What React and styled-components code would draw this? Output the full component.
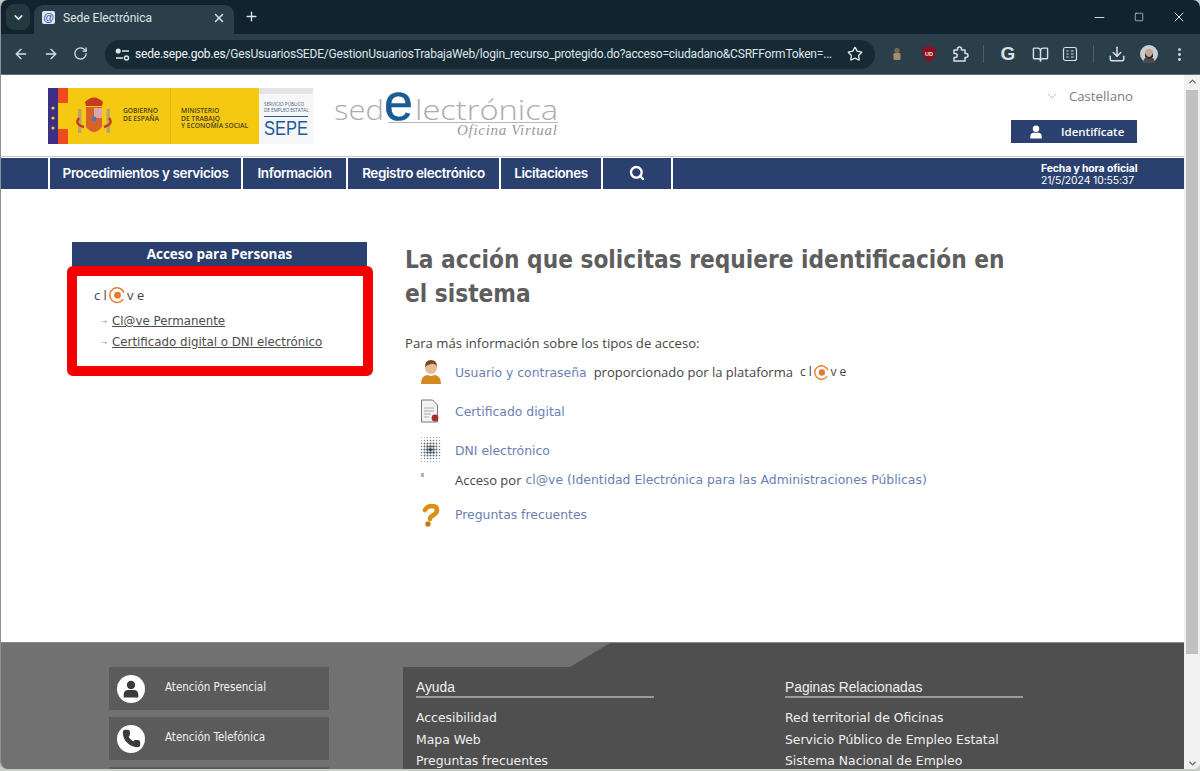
import React from 'react';
import styled, { createGlobalStyle } from 'styled-components';
import {
  ArrowLeft, ArrowRight, BookOpen, ChevronDown, ChevronUp, Download, Minus, MoreVertical,
  Plus, RotateCw, Search, Square, Star, X, Phone,
} from 'lucide-react';

const GlobalStyle = createGlobalStyle`
  html, body {
    margin: 0;
    height: 771px;
    overflow: hidden;
    background: #c7cdc6;
  }
  * { box-sizing: border-box; }
`;

const Win = styled.div`
  width: 1200px;
  height: 769px;
  border-radius: 7px;
  overflow: hidden;
  display: flex;
  flex-direction: column;
  background: #fff;
  border-left: 1px solid #8b9396;
`;

const TabStrip = styled.div`
  height: 34px;
  flex: none;
  background: #10232e;
  display: flex;
  align-items: flex-end;
  padding-left: 5px;
  color: #dfe5e8;
  font-family: Roboto, sans-serif;
`;

const TabMenu = styled.div`
  width: 24px;
  height: 26px;
  margin-bottom: 4px;
  border-radius: 8px;
  background: #24383f;
  display: flex;
  align-items: center;
  justify-content: center;
`;

const Tab = styled.div`
  width: 200px;
  height: 29px;
  margin-left: 4px;
  padding: 0 8px 4px 8px;
  border-radius: 9px 9px 0 0;
  background: #2a3f49;
  display: flex;
  align-items: center;
  font-size: 12px;
`;

const Favicon = styled.div`
  width: 13px;
  height: 13px;
  margin-right: 8px;
  border-radius: 2px;
  background: #dfe7f5;
  color: #3c5fa8;
  font: 700 11px/13px "Liberation Sans", sans-serif;
  text-align: center;
`;

const TabTitle = styled.span`
  flex: 1;
`;

const NewTab = styled.div`
  margin: 0 0 10px 10px;
  display: flex;
`;

const WinControls = styled.div`
  margin-left: auto;
  height: 34px;
  display: flex;
  align-items: center;
  gap: 24px;
  padding-right: 13px;
`;

const Toolbar = styled.div`
  height: 41px;
  flex: none;
  background: #2a3f49;
  border-bottom: 1px solid #5f6e74;
  display: flex;
  align-items: center;
  padding-left: 12px;
  color: #d9e0e3;
`;

const NavIcons = styled.div`
  width: 92px;
  flex: none;
  display: flex;
  gap: 14px;
`;

const Omnibox = styled.div`
  width: 770px;
  flex: none;
  height: 29px;
  border-radius: 15px;
  background: #162a35;
  display: flex;
  align-items: center;
  padding: 0 12px 0 10px;
  font: 12px Roboto, sans-serif;
  letter-spacing: -0.2px;
  white-space: nowrap;
  color: #dfe5e8;
`;

const SiteInfo = styled.div`
  width: 20px;
  flex: none;
  display: flex;
`;

const Url = styled.span`
  flex: 1;
  min-width: 0;
  span { color: #f4f6f7; }
`;

const ExtIcons = styled.div`
  flex: 1;
  display: flex;
  align-items: center;
  padding-left: 6px;
`;

const ToolSlot = styled.div`
  width: ${(p) => p.$w}px;
  flex: none;
  display: flex;
  justify-content: center;
`;

const Divider = styled.div`
  width: 1px;
  height: 18px;
  background: #4c5f68;
`;

const GoogleG = styled.span`
  font: 700 19px/20px "Liberation Sans", sans-serif;
  color: #d9e0e3;
`;

const Viewport = styled.div`
  flex: 1;
  min-height: 0;
  display: flex;
`;

const Page = styled.div`
  flex: 1;
  min-width: 0;
  display: flex;
  flex-direction: column;
`;

const Scrollbar = styled.div`
  width: 16px;
  flex: none;
  background: #f1f1f1;
  display: flex;
  flex-direction: column;
  align-items: center;
  color: #666;
  padding: 1px 0 0;
`;

const ScrollThumb = styled.div`
  width: 12px;
  height: 564px;
  margin-top: 3px;
  background: #c1c1c1;
`;

const ScrollEnd = styled.div`
  margin-top: auto;
  display: flex;
`;

const Header = styled.header`
  height: 81px;
  flex: none;
  display: flex;
  padding: 13px 47px 0 47px;
`;

const HeaderRight = styled.div`
  margin-left: auto;
  display: flex;
  flex-direction: column;
  align-items: flex-end;
`;

const Language = styled.div`
  display: flex;
  align-items: center;
  gap: 9px;
  height: 18px;
  margin: -1px 4px 0 0;
  font: 13.2px "Open Sans", sans-serif;
  color: #7c7c7c;
`;

const LoginButton = styled.div`
  width: 126px;
  height: 23px;
  margin-top: 15px;
  background: #2a4170;
  color: #fff;
  display: flex;
  align-items: center;
  padding-left: 18px;
  gap: 18px;
  font: 600 11.5px "Open Sans", sans-serif;
`;

const NavBar = styled.nav`
  height: 33px;
  flex: none;
  display: flex;
  gap: 2px;
  padding-top: 1px;
  border-top: 1px solid #c4c9d0;
  background: #fff;
`;

const NavItem = styled.div`
  width: ${(p) => p.$w}px;
  padding-bottom: 1px;
  background: #2a4170;
  color: #fff;
  font: 600 13.5px Inter, sans-serif;
  letter-spacing: -0.4px;
  display: flex;
  align-items: center;
  justify-content: center;
`;

const Clock = styled.div`
  flex: 1;
  background: #2a4170;
  color: #fff;
  padding: 5px 0 0 368px;
  font: 10.4px/12px Inter, sans-serif;
  letter-spacing: -0.1px;
  white-space: nowrap;
  b { display: block; font-weight: 700; }
`;

const Main = styled.main`
  flex: 1;
  min-height: 0;
  display: flex;
  padding: 53px 0 0 66px;
`;

const Sidebar = styled.aside`
  width: 306px;
  flex: none;
`;

const SideTitle = styled.div`
  margin: 0 6px 0 5px;
  height: 24px;
  background: #2a4170;
  color: #fff;
  text-align: center;
  font: 700 13.5px/24px "Open Sans", sans-serif;
`;

const SideBox = styled.div`
  height: 110px;
  border: 10px solid #f40000;
  border-radius: 6px;
  padding: 10px 17px 0;
  background: #fff;
`;

const SideLinks = styled.div`
  margin-top: 7px;
`;

const SideLink = styled.a`
  display: block;
  margin-left: 7px;
  height: 21px;
  font: 11.85px/21px "DejaVu Sans", sans-serif;
  color: #4c4c4c;
  text-decoration: underline;
  &::before {
    content: '→';
    display: inline-block;
    width: 11px;
    font-size: 7px;
    vertical-align: 1px;
    color: #999;
  }
`;

const Content = styled.section`
  margin-left: 32px;
  width: 640px;
`;

const Title = styled.h1`
  margin: 0;
  padding-top: 1px;
  font: 700 24.2px/34px "DejaVu Sans Condensed", "DejaVu Sans", sans-serif;
  color: #5e5e5e;
  width: 610px;
`;

const Lead = styled.p`
  margin: 23px 0 0;
  font: 13.15px/18px "Open Sans", sans-serif;
  color: #444;
`;

const AccessList = styled.ul`
  list-style: none;
  margin: 0;
  padding: 0 0 0 15px;
`;

const AccessRow = styled.li`
  height: ${(p) => p.$h}px;
  display: flex;
  align-items: center;
  font: 13px "Open Sans", sans-serif;
  color: #444;
  white-space: nowrap;
`;

const RowIcon = styled.div`
  width: 35px;
  flex: none;
  display: flex;
`;

const InfoLink = styled.a`
  font: 12.4px "DejaVu Sans", sans-serif;
  color: #6b80b4;
  margin-left: ${(p) => p.$ml || 0}px;
`;

const PlainText = styled.span`
  margin: 0 ${(p) => p.$mr || 0}px 0 ${(p) => p.$ml || 0}px;
`;

const ClaveMark = styled.span`
  display: inline-flex;
  align-items: center;
  font: ${(p) => p.$size}px "Open Sans", sans-serif;
  letter-spacing: ${(p) => p.$size * 0.26}px;
  color: #444;
  line-height: 1;
  svg { margin: 0 ${(p) => p.$size * 0.14}px 0 -${(p) => p.$size * 0.1}px; }
`;

const Footer = styled.footer`
  height: 127px;
  flex: none;
  display: flex;
  overflow: hidden;
  background: #717171;
  border-top: 1px solid #8a8a8a;
  padding-left: 108px;
`;

const ContactCol = styled.div`
  width: 220px;
  flex: none;
  padding-top: 24px;
`;

const ContactButton = styled.div`
  height: 43px;
  margin-bottom: 7px;
  background: #5b5b5b;
  display: flex;
  align-items: center;
  padding-left: 8px;
  color: #f2f2f2;
  font: 11.5px "DejaVu Sans Condensed", "DejaVu Sans", sans-serif;
`;

const ContactLabel = styled.span`
  padding-bottom: 3px;
`;

const CircleIcon = styled.div`
  width: 28px;
  height: 28px;
  margin-right: 20px;
  border-radius: 50%;
  background: #fff;
  color: #3b3b3b;
  display: flex;
  align-items: center;
  justify-content: center;
`;

const LinksPanel = styled.div`
  flex: 1;
  margin-left: 74px;
  padding: 36px 0 0 13px;
  background: #4f4f4f;
  clip-path: polygon(0 24px, 167px 24px, 207px 0, 100% 0, 100% 100%, 0 100%);
  display: flex;
  gap: 131px;
`;

const LinkCol = styled.div`
  width: 238px;
  flex: none;
`;

const LinkHead = styled.div`
  height: 19px;
  border-bottom: 2px solid #9a9a9a;
  font: 13.8px/17px "Liberation Sans", sans-serif;
  color: #f0f0f0;
  margin-bottom: 9px;
`;

const FooterLink = styled.div`
  height: 21.5px;
  font: 12.4px/21.5px "DejaVu Sans", sans-serif;
  color: #f0f0f0;
  white-space: nowrap;
`;

const navItems = [
  ['Procedimientos y servicios', 191],
  ['Información', 103],
  ['Registro electrónico', 151],
  ['Licitaciones', 100],
];

const ClaveLogo = ({ size }) => (
  <ClaveMark $size={size}>
    cl
    <svg width={size * 1.25} height={size * 1.25} viewBox="0 0 20 20">
      <path d="M17.5 15A9 9 0 1 1 18.5 7" fill="none" stroke="#e8792b" strokeWidth="1.8" />
      <circle cx="10.5" cy="10" r="4.2" fill="#e8792b" />
    </svg>
    ve
  </ClaveMark>
);

const GovLogo = () => (
  <svg width="266" height="56" viewBox="0 0 266 56">
    <rect width="265" height="56" fill="#f6f6f6" />
    <rect width="211" height="56" fill="#f5c912" />
    <rect width="10" height="56" fill="#3d2f87" />
    <rect x="10" y="0" width="10" height="15" fill="#ee4b1f" />
    <rect x="10" y="41" width="10" height="15" fill="#ee4b1f" />
    <g fill="#f5c912">
      <circle cx="5" cy="20" r="1.6" />
      <circle cx="5" cy="30" r="1.6" />
      <circle cx="5" cy="40" r="1.6" />
    </g>
    {/* escudo */}
    <path d="M37 14q9-9 18 0l-1 4H38z" fill="#c73a1c" />
    <rect x="30" y="21" width="3.5" height="24" fill="#b8a36a" />
    <rect x="58.5" y="21" width="3.5" height="24" fill="#b8a36a" />
    <path d="M38 19h16v20q-8 10-16 0z" fill="#d8622a" />
    <rect x="46" y="20" width="8" height="10" fill="#d9a5b0" />
    <path d="M31 30q-5 6 5 9M61 30q5 6-5 9" stroke="#c73a1c" strokeWidth="2.4" fill="none" />
    <circle cx="46" cy="31" r="2.5" fill="#5b6fa8" />
    <rect x="122" width="1" height="56" fill="#e2b80e" />
    <g fontFamily="'Open Sans', sans-serif" fontSize="6.7" fontWeight="600" fill="#4a4020">
      <text x="75" y="25">GOBIERNO</text>
      <text x="75" y="33">DE ESPAÑA</text>
      <text x="133" y="25">MINISTERIO</text>
      <text x="133" y="33">DE TRABAJO</text>
      <text x="133" y="40">Y ECONOMÍA SOCIAL</text>
    </g>
    <rect x="211" width="54" height="6" fill="#e4e4e4" />
    <g fontFamily="'Open Sans', sans-serif" fontSize="4.6" fill="#3d5a8a">
      <text x="216" y="18">SERVICIO PÚBLICO</text>
      <text x="216" y="24">DE EMPLEO ESTATAL</text>
    </g>
    <rect x="216" y="28" width="44" height="1" fill="#2a5a93" />
    <text x="216" y="47" fontFamily="'Liberation Sans', sans-serif" fontSize="19.5" fill="#1d5a9a" textLength="44" lengthAdjust="spacingAndGlyphs">SEPE</text>
  </svg>
);

const SedeLogo = () => (
  <svg width="228" height="70" viewBox="0 0 228 70" style={{ marginLeft: 20, marginTop: -13 }}>
    <g fontFamily="'Open Sans', sans-serif" fill="#a9adaf" fontWeight="300" fontSize="28">
      <text x="0" y="45" textLength="50" lengthAdjust="spacingAndGlyphs">sed</text>
      <text x="81" y="45" textLength="143" lengthAdjust="spacingAndGlyphs">lectrónica</text>
    </g>
    <text x="50" y="45" fontFamily="'Liberation Sans', sans-serif" fontSize="52" fill="#1b5b94" stroke="#1b5b94" strokeWidth="0.6">e</text>
    <rect x="54" y="47" width="170" height="1" fill="#b4b8ba" />
    <text x="123" y="60" fontFamily="'Liberation Serif', serif" fontStyle="italic" fontSize="15" fill="#9a9a9a" letterSpacing="0.7">Oficina Virtual</text>
  </svg>
);

const PersonSolid = ({ size, color }) => (
  <svg width={size} height={size} viewBox="0 0 16 16">
    <circle cx="8" cy="4.4" r="3.7" fill={color} />
    <path d="M1.5 15.5v-2.4q0-4.3 4-4.3h5q4 0 4 4.3v2.4z" fill={color} />
  </svg>
);

const UserBadge = () => (
  <svg width="22" height="26" viewBox="0 0 22 26">
    <path d="M1 25q0-8 6-9l4 1 4-1q6 1 6 9z" fill="#d08a1e" />
    <circle cx="11" cy="9" r="6" fill="#e7bd97" />
    <path d="M5 8q0-7 6-7t6 7q-2-4-6-3t-6 3z" fill="#7a4a23" />
  </svg>
);

const CertBadge = () => (
  <svg width="20" height="25" viewBox="0 0 20 25">
    <path d="M1.5 1h11l5 5v17h-16z" fill="#f3f3f3" stroke="#777" />
    <path d="M4 9h10M4 12h10M4 15h7M4 18h5" stroke="#aaa" />
    <circle cx="15" cy="19" r="3.4" fill="#a92c2c" />
  </svg>
);

const dniDots = [];
for (let y = 0; y < 9; y++) {
  for (let x = 0; x < 7; x++) {
    const d = Math.hypot(x - 3, y - 4);
    dniDots.push({ x: x * 3 + 1.5, y: y * 3 + 1.5, r: Math.max(0.5, 1.6 - d * 0.25), o: Math.max(0.45, 1 - d * 0.1) });
  }
}

const DniBadge = () => (
  <svg width="21" height="28" viewBox="0 0 21 28">
    {dniDots.map((d) => (
      <circle key={`${d.x}-${d.y}`} cx={d.x} cy={d.y} r={d.r} fill="#2c3a46" opacity={d.o} />
    ))}
  </svg>
);

const SmallDot = () => (
  <svg width="6" height="6" viewBox="0 0 6 6" style={{ margin: '-8px 0 0 0' }}>
    <rect x="1" y="1" width="3" height="4" fill="#b5b5b5" />
  </svg>
);

const QuestionBadge = () => (
  <svg width="20" height="24" viewBox="0 0 20 24">
    <path d="M5 7q2-4 7-4t5 4q0 3-3.5 5T10 16" fill="none" stroke="#dd8f12" strokeWidth="4.6" strokeLinecap="round" />
    <circle cx="8" cy="21" r="2.7" fill="#c87a0e" />
  </svg>
);

const UBlock = () => (
  <svg width="16" height="18" viewBox="0 0 16 18">
    <path d="M8 1l7 2q0 10-7 14Q1 13 1 3z" fill="#8a1220" />
    <text x="8" y="10.5" fontSize="5.5" fontWeight="700" fill="#eee" textAnchor="middle" fontFamily="'Liberation Sans', sans-serif">UD</text>
  </svg>
);

const Thumb = () => (
  <svg width="10" height="14" viewBox="0 0 10 14">
    <rect x="2.5" y="1" width="5" height="5" rx="2" fill="#7a6a55" />
    <rect x="1.5" y="6" width="7" height="7" rx="1" fill="#a38e6d" />
  </svg>
);

const TuneIcon = () => (
  <svg width="15" height="13" viewBox="0 0 15 13" fill="none" stroke="currentColor" strokeWidth="1.5">
    <circle cx="3.2" cy="3" r="1.8" fill="currentColor" />
    <path d="M7 3h7M1 10h7" />
    <circle cx="11.5" cy="10" r="2" />
  </svg>
);

const ExtensionIcon = () => (
  <svg width="18" height="18" viewBox="0 0 18 18" fill="none" stroke="currentColor" strokeWidth="1.5" strokeLinejoin="round">
    <path d="M3 5h3.5V4a2 2 0 0 1 4 0v1H14v3.5h1a2 2 0 0 1 0 4h-1V16H3v-3.5h1.2a2 2 0 0 0 0-4H3z" />
  </svg>
);

const ReaderIcon = () => (
  <svg width="16" height="16" viewBox="0 0 16 16" fill="none" stroke="currentColor" strokeWidth="1.2">
    <rect x="1.5" y="1.5" width="13" height="13" rx="2" />
    <path d="M4.5 5h2M9 5h2.5M4.5 8h2M9 8h2.5M4.5 11h2M9 11h2.5" />
  </svg>
);

const AvatarIcon = () => (
  <svg width="18" height="18" viewBox="0 0 18 18">
    <circle cx="9" cy="9" r="9" fill="#c9ced1" />
    <path d="M3 18q0-6 6-6t6 6z" fill="#4a4a50" />
    <circle cx="9" cy="8" r="4.2" fill="#c9a591" />
    <path d="M5 8q4 8 8 0v4q-4 4-8 0z" fill="#2f2c30" />
  </svg>
);

const App = () => (
  <>
    <GlobalStyle />
    <Win>
      <TabStrip>
        <TabMenu><ChevronDown size={13} strokeWidth={3} /></TabMenu>
        <Tab>
          <Favicon>@</Favicon>
          <TabTitle>Sede Electrónica</TabTitle>
          <X size={14} strokeWidth={2.4} />
        </Tab>
        <NewTab><Plus size={15} strokeWidth={2.2} /></NewTab>
        <WinControls>
          <Minus size={15} strokeWidth={1.5} />
          <Square size={10} strokeWidth={1.6} style={{ margin: '0 3px' }} />
          <X size={16} strokeWidth={1.5} />
        </WinControls>
      </TabStrip>
      <Toolbar>
        <NavIcons>
          <ArrowLeft size={16} />
          <ArrowRight size={16} />
          <RotateCw size={15} />
        </NavIcons>
        <Omnibox>
          <SiteInfo><TuneIcon /></SiteInfo>
          <Url><span>sede.sepe.gob.es</span>/GesUsuariosSEDE/GestionUsuariosTrabajaWeb/login_recurso_protegido.do?acceso=ciudadano&amp;CSRFFormToken=...</Url>
          <Star size={16} />
        </Omnibox>
        <ExtIcons>
          <ToolSlot $w={32}><Thumb /></ToolSlot>
          <ToolSlot $w={32}><UBlock /></ToolSlot>
          <ToolSlot $w={30}><ExtensionIcon /></ToolSlot>
          <ToolSlot $w={16}><Divider /></ToolSlot>
          <ToolSlot $w={34}><GoogleG>G</GoogleG></ToolSlot>
          <ToolSlot $w={30}><BookOpen size={17} /></ToolSlot>
          <ToolSlot $w={30}><ReaderIcon /></ToolSlot>
          <ToolSlot $w={16}><Divider /></ToolSlot>
          <ToolSlot $w={32}><Download size={18} /></ToolSlot>
          <ToolSlot $w={32}><AvatarIcon /></ToolSlot>
          <ToolSlot $w={28}><MoreVertical size={17} /></ToolSlot>
        </ExtIcons>
      </Toolbar>
      <Viewport>
        <Page>
          <Header>
            <GovLogo />
            <SedeLogo />
            <HeaderRight>
              <Language><ChevronDown size={16} strokeWidth={1} color="#aaa" />Castellano</Language>
              <LoginButton>
                <PersonSolid size={14} color="#fff" />
                Identifícate
              </LoginButton>
            </HeaderRight>
          </Header>
          <NavBar>
            <NavItem $w={47} />
            {navItems.map(([label, w]) => (
              <NavItem key={label} $w={w}>{label}</NavItem>
            ))}
            <NavItem $w={68}><Search size={16} strokeWidth={3.5} /></NavItem>
            <Clock>
              <b>Fecha y hora oficial</b>
              21/5/2024 10:55:37
            </Clock>
          </NavBar>
          <Main>
            <Sidebar>
              <SideTitle>Acceso para Personas</SideTitle>
              <SideBox>
                <ClaveLogo size={13} />
                <SideLinks>
                  <SideLink>Cl@ve Permanente</SideLink>
                  <SideLink>Certificado digital o DNI electrónico</SideLink>
                </SideLinks>
              </SideBox>
            </Sidebar>
            <Content>
              <Title>La acción que solicitas requiere identificación en el sistema</Title>
              <Lead>Para más información sobre los tipos de acceso:</Lead>
              <AccessList>
                <AccessRow $h={40}>
                  <RowIcon><UserBadge /></RowIcon>
                  <InfoLink>Usuario y contraseña</InfoLink>
                  <PlainText $ml={7} $mr={7}>proporcionado por la plataforma</PlainText>
                  <ClaveLogo size={12} />
                </AccessRow>
                <AccessRow $h={39}>
                  <RowIcon><CertBadge /></RowIcon>
                  <InfoLink>Certificado digital</InfoLink>
                </AccessRow>
                <AccessRow $h={38}>
                  <RowIcon><DniBadge /></RowIcon>
                  <InfoLink>DNI electrónico</InfoLink>
                </AccessRow>
                <AccessRow $h={21}>
                  <RowIcon><SmallDot /></RowIcon>
                  <PlainText>Acceso por</PlainText>
                  <InfoLink $ml={4}>cl@ve (Identidad Electrónica para las Administraciones Públicas)</InfoLink>
                </AccessRow>
                <AccessRow $h={49}>
                  <RowIcon><QuestionBadge /></RowIcon>
                  <InfoLink>Preguntas frecuentes</InfoLink>
                </AccessRow>
              </AccessList>
            </Content>
          </Main>
          <Footer>
            <ContactCol>
              <ContactButton>
                <CircleIcon><PersonSolid size={18} color="#3b3b3b" /></CircleIcon>
                <ContactLabel>Atención Presencial</ContactLabel>
              </ContactButton>
              <ContactButton>
                <CircleIcon><Phone size={19} fill="#3b3b3b" /></CircleIcon>
                <ContactLabel>Atención Telefónica</ContactLabel>
              </ContactButton>
              <ContactButton />
            </ContactCol>
            <LinksPanel>
              <LinkCol>
                <LinkHead>Ayuda</LinkHead>
                <FooterLink>Accesibilidad</FooterLink>
                <FooterLink>Mapa Web</FooterLink>
                <FooterLink>Preguntas frecuentes</FooterLink>
              </LinkCol>
              <LinkCol>
                <LinkHead>Paginas Relacionadas</LinkHead>
                <FooterLink>Red territorial de Oficinas</FooterLink>
                <FooterLink>Servicio Público de Empleo Estatal</FooterLink>
                <FooterLink>Sistema Nacional de Empleo</FooterLink>
              </LinkCol>
            </LinksPanel>
          </Footer>
        </Page>
        <Scrollbar>
          <ChevronUp size={11} strokeWidth={3} />
          <ScrollThumb />
          <ScrollEnd><ChevronDown size={11} strokeWidth={3} /></ScrollEnd>
        </Scrollbar>
      </Viewport>
    </Win>
  </>
);

export default App;
